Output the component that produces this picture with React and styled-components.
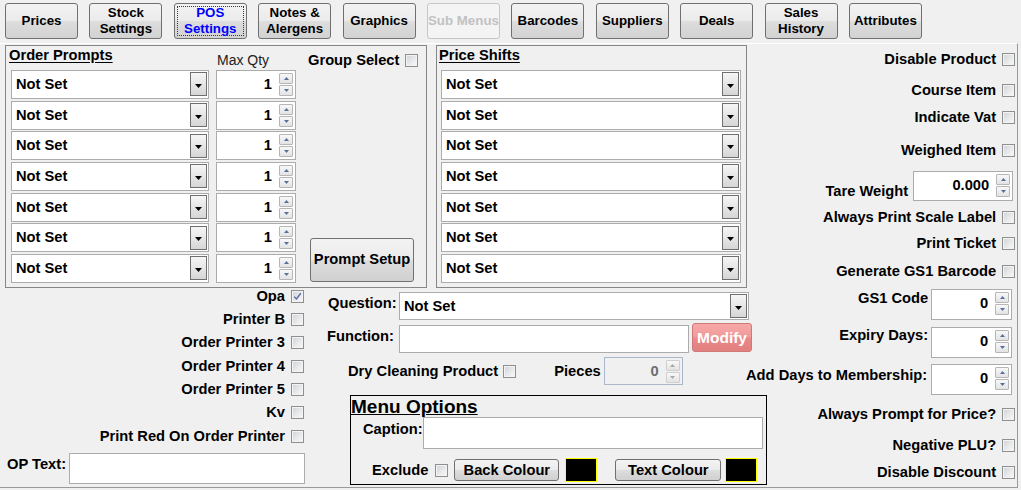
import React from 'react';
import styled, { createGlobalStyle } from 'styled-components';

const GlobalStyle = createGlobalStyle`
  html, body { margin: 0; padding: 0; background: #f0f0f0; }
  body {
    font-family: "Liberation Sans", Arial, sans-serif;
    color: #000;
    overflow: hidden;
  }
  * { box-sizing: border-box; }
`;

const FONT = `"Liberation Sans", Arial, sans-serif`;

const Window = styled.div`
  width: 1021px;
  height: 490px;
  background: #f0f0f0;
`;

/* ---------- top tab buttons ---------- */
const Toolbar = styled.div`
  display: flex;
  gap: 11.4px;
  height: 43px;
  padding: 3px 0 0 5px;
`;

const TabButton = styled.button`
  flex: none;
  width: 73px;
  height: 36px;
  padding: 0;
  position: relative;
  border: 1px solid ${(p) => (p.$disabled ? '#c4c6c8' : '#707070')};
  border-radius: 3px;
  background: ${(p) =>
    p.$disabled
      ? '#f4f4f4'
      : 'linear-gradient(#f3f3f3 0%, #ebebeb 48%, #dddddd 52%, #d2d2d2 100%)'};
  color: ${(p) => (p.$active ? '#0000ff' : p.$disabled ? '#c2c2c2' : '#000')};
  font: bold 13.3px/16px ${FONT};
  white-space: pre-line;
  &::after {
    content: '';
    display: ${(p) => (p.$active ? 'block' : 'none')};
    position: absolute;
    inset: 2px;
    border: 1px dotted #3a3a3a;
  }
`;

/* ---------- page frame ---------- */
const Page = styled.div`
  width: 1018px;
  height: 445px;
  border-top: 1px solid #ffffff;
  border-right: 1px solid #9a9a9a;
  border-bottom: 1px solid #9a9a9a;
  display: flex;
`;

const LeftMain = styled.div`
  flex: none;
  width: 746px;
  display: flex;
  flex-direction: column;
`;

const GroupsRow = styled.div`
  display: flex;
  gap: 9px;
  padding: 1px 0 0 5px;
`;

const GroupBox = styled.div`
  flex: none;
  width: ${(p) => p.$w}px;
  height: 243px;
  border: 1px solid #868686;
  display: grid;
  grid-template-columns: ${(p) => p.$cols};
  grid-template-rows: 22.33px repeat(7, 29px);
  row-gap: 1.67px;
  padding-left: ${(p) => p.$pad}px;
`;

const GroupTitle = styled.div`
  font: bold 14.7px/17px ${FONT};
  text-decoration: underline;
  text-underline-offset: 2px;
  margin: 1px 0 0 -2px;
  white-space: nowrap;
`;

const ColumnHead = styled.div`
  align-self: end;
  font: ${(p) => (p.$bold ? 'bold 14.7px' : '14px')}/16px ${FONT};
  color: ${(p) => (p.$bold ? '#000' : '#222')};
  display: flex;
  align-items: center;
  gap: 6px;
  margin-left: ${(p) => p.$ml || 0}px;
  white-space: nowrap;
`;

/* ---------- combo box ---------- */
const Combo = styled.div`
  width: ${(p) => p.$w}px;
  height: ${(p) => p.$h || 29}px;
  background: #fff;
  border: 1px solid #acacac;
  display: flex;
  align-items: center;
  padding: 0 1px 0 4px;
  flex: none;
`;

const ComboText = styled.span`
  flex: 1;
  font: bold 14.7px/17px ${FONT};
  white-space: nowrap;
`;

const DropButton = styled.span`
  flex: none;
  width: 17px;
  height: 24px;
  border: 1px solid #6f6f6f;
  background: linear-gradient(#f6f6f6 0%, #e6e6e6 50%, #d6d6d6 100%);
  display: flex;
  align-items: center;
  justify-content: center;
  padding-top: 3px;
`;

const DropArrow = () => (
  <svg width="7" height="4" viewBox="0 0 7 4">
    <polygon points="0,0 7,0 3.5,4" fill="#000" />
  </svg>
);

const ComboBox = ({ w, h, value = 'Not Set' }) => (
  <Combo $w={w} $h={h}>
    <ComboText>{value}</ComboText>
    <DropButton>
      <DropArrow />
    </DropButton>
  </Combo>
);

/* ---------- numeric spinner ---------- */
const Spin = styled.div`
  flex: none;
  width: ${(p) => p.$w}px;
  height: ${(p) => p.$h}px;
  margin-right: ${(p) => p.$mr || 0}px;
  background: ${(p) => (p.$disabled ? '#f0f0f0' : '#fff')};
  border: 1px solid ${(p) => (p.$disabled ? '#a9b7c9' : '#acacac')};
  display: flex;
  align-items: flex-start;
  padding: 2px 2px 0 0;
`;

const SpinValue = styled.span`
  flex: 1;
  text-align: right;
  margin: 3px 7px 0 0;
  font: bold 14.7px/17px ${FONT};
  color: ${(p) => (p.$disabled ? '#6d6d6d' : '#000')};
`;

const SpinButtons = styled.span`
  flex: none;
  width: 14px;
  display: flex;
  flex-direction: column;
  gap: 1px;
`;

const SpinButton = styled.span`
  height: 11px;
  border: 1px solid ${(p) => (p.$disabled ? '#cfcfcf' : '#b6b6b6')};
  border-radius: 1px;
  background: linear-gradient(#f8f8f8, #e3e3e3);
  display: flex;
  align-items: center;
  justify-content: center;
`;

const SpinArrow = ({ up, disabled }) => (
  <svg width="5" height="3" viewBox="0 0 5 3">
    <polygon
      points={up ? '0,3 5,3 2.5,0' : '0,0 5,0 2.5,3'}
      fill={disabled ? '#a8a8a8' : '#56709e'}
    />
  </svg>
);

const Spinner = ({ value, w = 80, h = 29, mr, disabled }) => (
  <Spin $w={w} $h={h} $mr={mr} $disabled={disabled}>
    <SpinValue $disabled={disabled}>{value}</SpinValue>
    <SpinButtons>
      <SpinButton $disabled={disabled}>
        <SpinArrow up disabled={disabled} />
      </SpinButton>
      <SpinButton $disabled={disabled}>
        <SpinArrow disabled={disabled} />
      </SpinButton>
    </SpinButtons>
  </Spin>
);

/* ---------- check box ---------- */
const CheckSquare = styled.span`
  flex: none;
  width: 13px;
  height: 13px;
  border: 1px solid #8e8f8f;
  background: linear-gradient(135deg, #cfd2d7 0%, #e8e9eb 55%, #f9f9f9 100%);
  box-shadow: inset 0 0 0 1px #f3f3f3;
  display: flex;
  align-items: center;
  justify-content: center;
`;

const CheckBox = ({ checked }) => (
  <CheckSquare>
    {checked && (
      <svg width="9" height="9" viewBox="0 0 9 9">
        <path d="M1.2 4.6 L3.4 7 L7.8 1.3" fill="none" stroke="#5d6aa8" strokeWidth="1.4" />
      </svg>
    )}
  </CheckSquare>
);

const CheckRow = styled.div`
  display: flex;
  align-items: center;
  gap: 6px;
  height: 16px;
  margin-top: ${(p) => p.$mt || 0}px;
  margin-right: ${(p) => p.$mr || 0}px;
  font: bold 14.7px/17px ${FONT};
  white-space: nowrap;
`;

const Check = ({ label, checked, mt, mr }) => (
  <CheckRow $mt={mt} $mr={mr}>
    <span>{label}</span>
    <CheckBox checked={checked} />
  </CheckRow>
);

/* ---------- buttons / inputs ---------- */
const PushButton = styled.button`
  flex: none;
  width: ${(p) => p.$w}px;
  height: ${(p) => p.$h}px;
  padding: 0;
  border: 1px solid #707070;
  border-radius: 3px;
  background: linear-gradient(#f3f3f3 0%, #ebebeb 48%, #dddddd 52%, #d0d0d0 100%);
  font: bold 14.7px/17px ${FONT};
  color: #000;
  margin: ${(p) => p.$m || '0'};
  justify-self: start;
  white-space: nowrap;
`;

const DangerButton = styled.button`
  flex: none;
  width: 60px;
  height: 29px;
  padding: 0;
  margin-left: 3px;
  border: 1px solid #cf7878;
  border-radius: 3px;
  background: linear-gradient(#f6a8a8 0%, #f19a9a 48%, #e98a8a 52%, #e27f7f 100%);
  color: #fff;
  font: bold 15.5px/17px ${FONT};
`;

const TextBox = styled.div`
  flex: none;
  width: ${(p) => p.$w}px;
  height: ${(p) => p.$h}px;
  margin-top: ${(p) => p.$mt || 0}px;
  background: #fff;
  border: 1px solid #acacac;
`;

const FieldLabel = styled.span`
  flex: none;
  width: ${(p) => (p.$w ? `${p.$w}px` : 'auto')};
  margin-top: ${(p) => p.$mt || 0}px;
  margin-left: ${(p) => p.$ml || 0}px;
  padding-left: ${(p) => p.$pl || 0}px;
  font: bold 14.7px/17px ${FONT};
  white-space: nowrap;
`;

const Swatch = styled.span`
  flex: none;
  width: 32px;
  height: 24px;
  background: #000;
  border: 1px solid #ffff00;
  margin-left: ${(p) => p.$ml}px;
`;

/* ---------- lower left block ---------- */
const BottomRow = styled.div`
  display: flex;
`;

const PrinterColumn = styled.div`
  flex: none;
  width: 305px;
  display: flex;
  flex-direction: column;
  align-items: flex-end;
  gap: 7.4px;
`;

const OpTextRow = styled.div`
  align-self: stretch;
  display: flex;
  align-items: flex-start;
  padding-left: 7px;
  margin-top: 1.5px;
`;

/* ---------- lower middle block ---------- */
const MiddleColumn = styled.div`
  flex: none;
  margin-left: 22px;
  display: flex;
  flex-direction: column;
`;

const FormRow = styled.div`
  display: flex;
  align-items: ${(p) => p.$align || 'flex-start'};
  margin-top: ${(p) => p.$mt || 0}px;
  height: ${(p) => (p.$h ? `${p.$h}px` : 'auto')};
`;

const MenuOptions = styled.div`
  flex: none;
  width: 417px;
  height: 90px;
  margin: 10px 0 0 23px;
  border: 1px solid #000;
  display: flex;
  flex-direction: column;
`;

const MenuTitle = styled.div`
  font: bold 19px/21px ${FONT};
  text-decoration: underline;
  text-underline-offset: 1px;
  white-space: nowrap;
`;

/* ---------- right column ---------- */
const RightColumn = styled.div`
  flex: 1;
  display: flex;
  flex-direction: column;
  align-items: flex-end;
  padding: 7px 3px 0 0;
`;

const SpinRow = styled.div`
  display: flex;
  align-items: flex-start;
  gap: ${(p) => p.$gap}px;
  margin-top: ${(p) => p.$mt}px;
  font: bold 14.7px/17px ${FONT};
  white-space: nowrap;
`;

const RowLabel = styled.span`
  margin-top: ${(p) => p.$mt}px;
`;

const tabs = [
  { label: 'Prices' },
  { label: 'Stock\nSettings' },
  { label: 'POS\nSettings', active: true },
  { label: 'Notes &\nAlergens' },
  { label: 'Graphics' },
  { label: 'Sub Menus', disabled: true },
  { label: 'Barcodes' },
  { label: 'Suppliers' },
  { label: 'Deals' },
  { label: 'Sales\nHistory' },
  { label: 'Attributes' },
];

const rows = [0, 1, 2, 3, 4, 5, 6];

const printers = [
  { label: 'Opa', checked: true },
  { label: 'Printer B' },
  { label: 'Order Printer 3' },
  { label: 'Order Printer 4' },
  { label: 'Order Printer 5' },
  { label: 'Kv' },
  { label: 'Print Red On Order Printer' },
];

export default function App() {
  return (
    <Window>
      <GlobalStyle />
      <Toolbar>
        {tabs.map((t) => (
          <TabButton key={t.label} $active={t.active} $disabled={t.disabled}>
            {t.label}
          </TabButton>
        ))}
      </Toolbar>

      <Page>
        <LeftMain>
          <GroupsRow>
            <GroupBox $w={422} $pad={5} $cols="205px 92px 1fr">
              <GroupTitle>Order Prompts</GroupTitle>
              <ColumnHead $ml={1}>Max Qty</ColumnHead>
              <ColumnHead $bold>
                Group Select <CheckBox />
              </ColumnHead>
              {rows.map((r) => (
                <React.Fragment key={r}>
                  <div style={{ gridRow: r + 2, gridColumn: 1 }}>
                    <ComboBox w={198} />
                  </div>
                  <div style={{ gridRow: r + 2, gridColumn: 2 }}>
                    <Spinner value="1" />
                  </div>
                </React.Fragment>
              ))}
              <PushButton
                $w={104}
                $h={44}
                $m="0 0 1px 2px"
                style={{ gridRow: '7 / 9', gridColumn: 3, alignSelf: 'end' }}
              >
                Prompt Setup
              </PushButton>
            </GroupBox>

            <GroupBox $w={311} $pad={4} $cols="300px">
              <GroupTitle>Price Shifts</GroupTitle>
              {rows.map((r) => (
                <ComboBox key={r} w={300} />
              ))}
            </GroupBox>
          </GroupsRow>

          <BottomRow>
            <PrinterColumn>
              {printers.map((p) => (
                <Check key={p.label} label={p.label} checked={p.checked} mr={1} />
              ))}
              <OpTextRow>
                <FieldLabel $w={62} $mt={2.5}>OP Text:</FieldLabel>
                <TextBox $w={236} $h={31} />
              </OpTextRow>
            </PrinterColumn>

            <MiddleColumn>
              <FormRow $mt={4}>
                <FieldLabel $w={72} $pl={1} $mt={3}>Question:</FieldLabel>
                <ComboBox w={350} h={28} />
              </FormRow>
              <FormRow $mt={3}>
                <FieldLabel $w={72} $mt={5}>Function:</FieldLabel>
                <TextBox $w={290} $h={28} $mt={2} />
                <DangerButton>Modify</DangerButton>
              </FormRow>
              <FormRow $mt={4} $h={28} $align="center">
                <FieldLabel $ml={21}>Dry Cleaning Product</FieldLabel>
                <span style={{ width: 5 }} />
                <CheckBox />
                <FieldLabel $ml={38}>Pieces</FieldLabel>
                <span style={{ width: 3 }} />
                <Spinner value="0" w={79} h={28} disabled />
              </FormRow>

              <MenuOptions>
                <MenuTitle>Menu Options</MenuTitle>
                <FormRow>
                  <FieldLabel $w={60} $ml={12} $mt={3.8}>Caption:</FieldLabel>
                  <TextBox $w={340} $h={32} />
                </FormRow>
                <FormRow $mt={9} $h={24} $align="center">
                  <FieldLabel $ml={21}>Exclude</FieldLabel>
                  <span style={{ width: 7 }} />
                  <CheckBox />
                  <PushButton $w={105} $h={22} $m="0 0 0 6px">Back Colour</PushButton>
                  <Swatch $ml={6} />
                  <PushButton $w={106} $h={22} $m="0 0 0 18px">Text Colour</PushButton>
                  <Swatch $ml={4} />
                </FormRow>
              </MenuOptions>
            </MiddleColumn>
          </BottomRow>
        </LeftMain>

        <RightColumn>
          <Check label="Disable Product" />
          <Check label="Course Item" mt={15.7} />
          <Check label="Indicate Vat" mt={11} />
          <Check label="Weighed Item" mt={17} />
          <SpinRow $gap={5} $mt={12.3}>
            <RowLabel $mt={12}>Tare Weight</RowLabel>
            <Spinner value="0.000" w={100} h={30} mr={2} />
          </SpinRow>
          <Check label="Always Print Scale Label" mt={8.7} />
          <Check label="Print Ticket" mt={10.3} />
          <Check label="Generate GS1 Barcode" mt={11.7} />
          <SpinRow $gap={3} $mt={9.3}>
            <RowLabel $mt={1.5}>GS1 Code</RowLabel>
            <Spinner value="0" w={81} h={31} mr={3} />
          </SpinRow>
          <SpinRow $gap={3} $mt={7}>
            <RowLabel $mt={0.5}>Expiry Days:</RowLabel>
            <Spinner value="0" w={81} h={31} mr={3} />
          </SpinRow>
          <SpinRow $gap={4} $mt={6}>
            <RowLabel $mt={2.8}>Add Days to Membership:</RowLabel>
            <Spinner value="0" w={81} h={31} mr={3} />
          </SpinRow>
          <Check label="Always Prompt for Price?" mt={11.3} />
          <Check label="Negative PLU?" mt={15.7} />
          <Check label="Disable Discount" mt={10.7} />
        </RightColumn>
      </Page>
    </Window>
  );
}
